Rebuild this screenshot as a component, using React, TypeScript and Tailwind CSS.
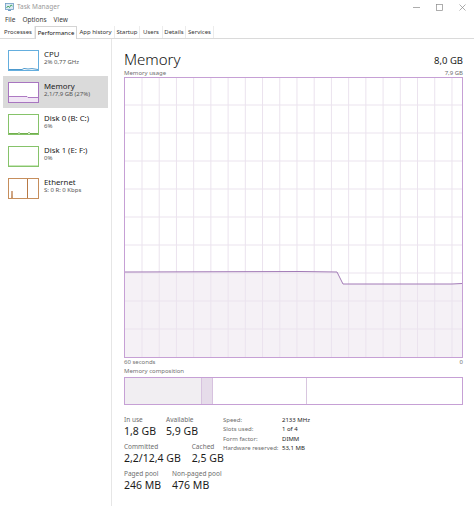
import React from 'react';

const TABS = [
  { label: 'Processes', w: 'w-[33px]' },
  { label: 'Performance', w: 'w-[42px]', active: true },
  { label: 'App history', w: 'w-[38px]' },
  { label: 'Startup', w: 'w-[25px]' },
  { label: 'Users', w: 'w-[23px]' },
  { label: 'Details', w: 'w-[23px]' },
  { label: 'Services', w: 'w-[28px]' },
];

type Thumb = 'cpu' | 'mem' | 'disk0' | 'disk1' | 'eth';

const DEVICES: { id: Thumb; title: string; sub: string; active?: boolean }[] = [
  { id: 'cpu', title: 'CPU', sub: '2% 0,77 GHz' },
  { id: 'mem', title: 'Memory', sub: '2,1/7,9 GB (27%)', active: true },
  { id: 'disk0', title: 'Disk 0 (B: C:)', sub: '6%' },
  { id: 'disk1', title: 'Disk 1 (E: F:)', sub: '0%' },
  { id: 'eth', title: 'Ethernet', sub: 'S: 0 R: 0 Kbps' },
];

const Thumbnail: React.FC<{ kind: Thumb }> = ({ kind }) => {
  if (kind === 'cpu') {
    return (
      <svg width="31" height="21" viewBox="0 0 31 21" className="shrink-0">
        <rect x="0.5" y="0.5" width="30" height="20" fill="#fff" stroke="#64aede" />
        <polyline points="1,19.5 14,19.5 16,18.5 20,19 24,18.6 30,19.5" fill="none" stroke="#1f7fc0" strokeWidth="0.8" />
      </svg>
    );
  }
  if (kind === 'mem') {
    return (
      <svg width="31" height="21" viewBox="0 0 31 21" className="shrink-0">
        <rect x="0.5" y="0.5" width="30" height="20" fill="#fff" stroke="#a875c0" />
        <polygon points="1,14.5 19,14.5 20,15.5 30,15.5 30,20 1,20" fill="#f1e6f5" />
        <polyline points="1,14.5 19,14.5 20,15.5 30,15.5" fill="none" stroke="#9a5ab5" strokeWidth="0.8" />
      </svg>
    );
  }
  if (kind === 'disk0' || kind === 'disk1') {
    return (
      <svg width="31" height="21" viewBox="0 0 31 21" className="shrink-0">
        <rect x="0.5" y="0.5" width="30" height="20" fill="#fff" stroke="#86c36a" />
        {kind === 'disk0' ? (
          <polyline points="1,19.5 10,19.5 11,18.6 12,19.5 20,19.5 21,18.3 22,19.5 30,19.5" fill="none" stroke="#4e9a1f" strokeWidth="0.8" />
        ) : (
          <line x1="1" y1="19.6" x2="30" y2="19.6" stroke="#9bd17f" strokeWidth="0.6" />
        )}
      </svg>
    );
  }
  return (
    <svg width="31" height="21" viewBox="0 0 31 21" className="shrink-0">
      <rect x="0.5" y="0.5" width="30" height="20" fill="#fff" stroke="#c68e5c" />
      <line x1="19.5" y1="1" x2="19.5" y2="20" stroke="#b06a30" strokeWidth="0.9" />
      <polyline points="3.5,20 4,13 4.5,20" fill="none" stroke="#b06a30" strokeWidth="0.7" />
    </svg>
  );
};

const UsageChart: React.FC = () => {
  const vLines = Array.from({ length: 19 }, (_, i) => 17 + i * 17.22);
  const hLines = Array.from({ length: 9 }, (_, i) => 27 + i * 28);
  const line = '0,194 175,193.5 212,194 218,206 327,206 337,205.5';
  return (
    <svg width="337" height="279" viewBox="0 0 337 279" className="block">
      <polygon points={`${line} 337,279 0,279`} fill="#f5f1f6" />
      {vLines.map(x => (
        <line key={`v${x}`} x1={x} y1="0" x2={x} y2="279" stroke="#ebe3ee" strokeWidth="1" />
      ))}
      {hLines.map(y => (
        <line key={`h${y}`} x1="0" y1={y} x2="337" y2={y} stroke="#ebe3ee" strokeWidth="1" />
      ))}
      <polyline points={line} fill="none" stroke="#a27bb6" strokeWidth="1" />
    </svg>
  );
};

const Stat: React.FC<{ label: string; value: string }> = ({ label, value }) => (
  <div className="flex flex-col shrink-0 whitespace-nowrap">
    <span className="text-[6.5px] leading-[8px] text-[#6d6d6d]">{label}</span>
    <span className="text-[10.5px] leading-[14px] text-[#1c1c1c]">{value}</span>
  </div>
);

const App: React.FC = () => {
  return (
    <div className="w-[474px] h-[506px] bg-white overflow-hidden flex flex-col font-['Noto_Sans','Open_Sans',sans-serif] select-none">
      {/* Title bar */}
      <div className="h-[14px] flex items-center pl-[5px]">
        <svg width="9" height="8" viewBox="0 0 9 8">
          <rect x="0.5" y="0.5" width="8" height="6" fill="#dbe9f4" stroke="#6d9cc4" strokeWidth="0.8" />
          <polyline points="1.5,5 3,3 4.5,4.5 6,2 7.5,3" fill="none" stroke="#3aa35a" strokeWidth="0.9" />
          <rect x="3" y="7" width="3" height="1" fill="#6d9cc4" />
        </svg>
        <span className="ml-[3px] text-[6.5px] leading-none text-[#9a9a9a]">Task Manager</span>
        <div className="ml-auto flex items-center">
          <div className="w-[24px] h-[14px] flex items-center justify-center">
            <svg width="7" height="7" viewBox="0 0 7 7"><line x1="0" y1="3.5" x2="7" y2="3.5" stroke="#8a8a8a" strokeWidth="0.7" /></svg>
          </div>
          <div className="w-[23px] h-[14px] flex items-center justify-center">
            <svg width="7" height="7" viewBox="0 0 7 7"><rect x="0.5" y="0.5" width="6" height="6" fill="none" stroke="#8a8a8a" strokeWidth="0.7" /></svg>
          </div>
          <div className="w-[23px] h-[14px] flex items-center justify-center">
            <svg width="7" height="7" viewBox="0 0 7 7">
              <line x1="0.5" y1="0.5" x2="6.5" y2="6.5" stroke="#8a8a8a" strokeWidth="0.7" />
              <line x1="6.5" y1="0.5" x2="0.5" y2="6.5" stroke="#8a8a8a" strokeWidth="0.7" />
            </svg>
          </div>
        </div>
      </div>

      {/* Menu */}
      <div className="h-[12px] flex items-center gap-[7px] pl-[5px] text-[6.5px] leading-none text-[#3a3a3a]">
        <span>File</span>
        <span>Options</span>
        <span>View</span>
      </div>

      {/* Tabs */}
      <div className="h-[13px] flex items-end pl-[2px] border-b border-[#dadada]">
        {TABS.map(t => (
          <div
            key={t.label}
            className={`${t.w} flex items-center justify-center text-[6px] leading-none whitespace-nowrap ${
              t.active
                ? 'bg-white border border-b-0 border-[#d4d4d4] text-[#111] -mb-px h-[13px]'
                : 'h-[12px] text-[#333] border-r border-[#ececec]'
            }`}
          >
            {t.label}
          </div>
        ))}
      </div>

      {/* Body */}
      <div className="flex-1 flex min-h-0">
        {/* Sidebar */}
        <div className="w-[112px] shrink-0 border-r border-[#e6e6e6] pt-[5px] px-[3px]">
          {DEVICES.map(d => (
            <div
              key={d.id}
              className={`h-[32px] flex items-start gap-[5px] pt-[6px] px-[5px] ${d.active ? 'bg-[#dadada]' : ''}`}
            >
              <Thumbnail kind={d.id} />
              <div className="flex flex-col -mt-[1px]">
                <span className="text-[7.8px] leading-[10px] text-[#1a1a1a] whitespace-nowrap">{d.title}</span>
                <span className="text-[6px] leading-[7px] text-[#555] whitespace-nowrap">{d.sub}</span>
              </div>
            </div>
          ))}
        </div>

        {/* Main */}
        <div className="flex-1 pl-[12px] pr-[11px] pt-[12px] flex flex-col">
          <div className="flex items-end justify-between h-[17px]">
            <span className="text-[15px] leading-[17px] font-light text-[#111]">Memory</span>
            <span className="text-[9.5px] leading-[12px] text-[#222] mb-[1px]">8,0 GB</span>
          </div>
          <div className="flex justify-between mt-[1px] h-[8px] text-[6px] leading-[8px] text-[#707070]">
            <span>Memory usage</span>
            <span>7,9 GB</span>
          </div>
          <div className="border border-[#c6a0d5] w-[339px] h-[281px]">
            <UsageChart />
          </div>
          <div className="flex justify-between h-[8px] text-[6px] leading-[8px] text-[#707070]">
            <span>60 seconds</span>
            <span>0</span>
          </div>
          <div className="mt-[1px] h-[9px] text-[6px] leading-[9px] text-[#707070]">Memory composition</div>
          <div className="mt-[1px] w-[339px] h-[28px] border border-[#c6a0d5] flex">
            <div className="w-[76px] bg-[#f1eef2]" />
            <div className="w-[12px] bg-[#e6dcea] border-x border-[#d7c2df]" />
            <div className="w-[94px] border-r border-[#d8c6df]" />
            <div className="flex-1" />
          </div>

          {/* Stats */}
          <div className="mt-[11px] flex items-start">
            <div className="w-[99px] shrink-0 flex flex-col gap-[5px]">
              <div className="flex gap-[10px]">
                <Stat label="In use" value="1,8 GB" />
                <Stat label="Available" value="5,9 GB" />
              </div>
              <div className="flex gap-[11px]">
                <Stat label="Committed" value="2,2/12,4 GB" />
                <Stat label="Cached" value="2,5 GB" />
              </div>
              <div className="flex gap-[11px]">
                <Stat label="Paged pool" value="246 MB" />
                <Stat label="Non-paged pool" value="476 MB" />
              </div>
            </div>
            <div className="grid grid-cols-[59px_auto] text-[6px] leading-[9.3px] whitespace-nowrap">
              <span className="text-[#6d6d6d]">Speed:</span>
              <span className="text-[#1c1c1c]">2133 MHz</span>
              <span className="text-[#6d6d6d]">Slots used:</span>
              <span className="text-[#1c1c1c]">1 of 4</span>
              <span className="text-[#6d6d6d]">Form factor:</span>
              <span className="text-[#1c1c1c]">DIMM</span>
              <span className="text-[#6d6d6d]">Hardware reserved:</span>
              <span className="text-[#1c1c1c]">53,1 MB</span>
            </div>
          </div>
        </div>
      </div>
    </div>
  );
};

export default App;
